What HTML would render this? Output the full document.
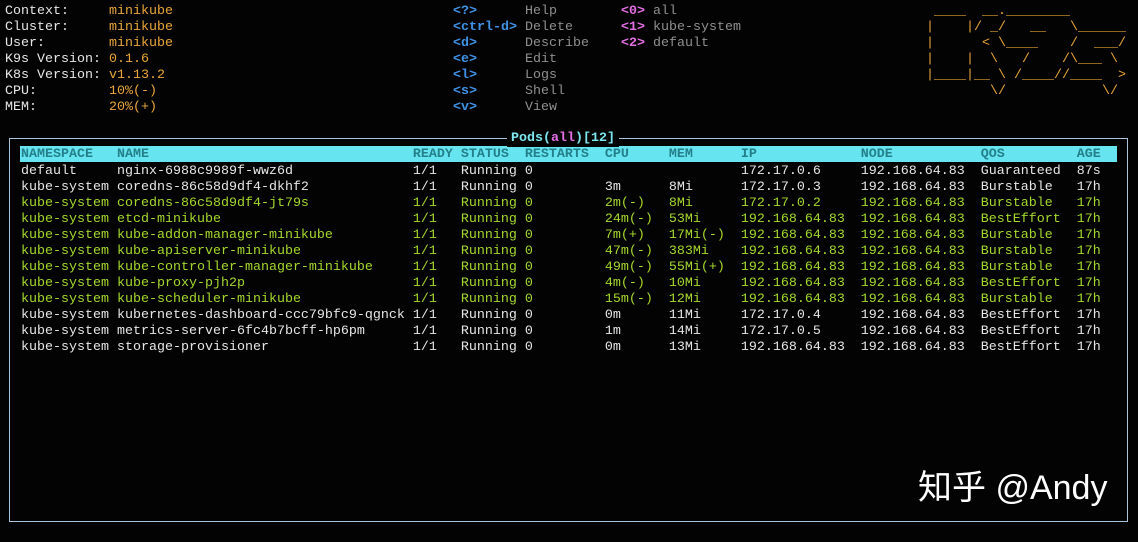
<!DOCTYPE html>
<html><head><meta charset="utf-8"><style>
html,body{margin:0;padding:0;background:#030303;width:1138px;height:542px;overflow:hidden}
pre{position:absolute;margin:0;font-family:"Liberation Mono",monospace;font-size:13.33px;line-height:16px;color:#e6e6e6}
.o{color:#e9a63c}.b{color:#3f93e6;font-weight:bold}.g{color:#8f8f8f}.m{color:#e36fe3;font-weight:bold}
.gr{color:#a4d72e}
#box{position:absolute;left:9px;top:138px;width:1119px;height:384px;border:1px solid #a9c4dc;box-sizing:border-box}
#hdr{position:absolute;left:20px;top:146px;width:1097px;height:16px;background:#66e4ef}
#title{position:absolute;left:507px;top:131px;background:#030303;padding:0 4px;color:#7de6ef;font-weight:bold}
#wm{position:absolute;left:918px;top:466px;color:#fff;font-family:"Liberation Sans","Noto Sans CJK SC",sans-serif;font-size:34px;line-height:44px}
</style></head><body>
<pre style="left:5px;top:4px">Context:     <span class="o">minikube</span>
Cluster:     <span class="o">minikube</span>
User:        <span class="o">minikube</span>
K9s Version: <span class="o">0.1.6</span>
K8s Version: <span class="o">v1.13.2</span>
CPU:         <span class="o">10%(-)</span>
MEM:         <span class="o">20%(+)</span></pre>
<pre style="left:453px;top:4px"><span class="b">&lt;?&gt;</span>      <span class="g">Help</span>
<span class="b">&lt;ctrl-d&gt;</span> <span class="g">Delete</span>
<span class="b">&lt;d&gt;</span>      <span class="g">Describe</span>
<span class="b">&lt;e&gt;</span>      <span class="g">Edit</span>
<span class="b">&lt;l&gt;</span>      <span class="g">Logs</span>
<span class="b">&lt;s&gt;</span>      <span class="g">Shell</span>
<span class="b">&lt;v&gt;</span>      <span class="g">View</span></pre>
<pre style="left:621px;top:4px"><span class="m">&lt;0&gt;</span> <span class="g">all</span>
<span class="m">&lt;1&gt;</span> <span class="g">kube-system</span>
<span class="m">&lt;2&gt;</span> <span class="g">default</span></pre>
<pre class="o" style="left:926px;top:4px"> ____  __.________       
|    |/ _/   __   \______
|      &lt; \____    /  ___/
|    |  \   /    /\___ \ 
|____|__ \ /____//____  &gt;
        \/            \/ </pre>
<div id="box"></div>
<div id="hdr"></div>
<pre id="title">Pods(<span style="color:#e36fe3">all</span>)[12]</pre>
<pre style="left:21px;top:147px;color:#237f8a;font-weight:bold">NAMESPACE   NAME                                 READY STATUS  RESTARTS  CPU     MEM      IP             NODE           QOS         AGE</pre>
<pre style="left:21px;top:164px">default     nginx-6988c9989f-wwz6d               1/1   Running 0                          172.17.0.6     192.168.64.83  Guaranteed  87s
kube-system coredns-86c58d9df4-dkhf2             1/1   Running 0         3m      8Mi      172.17.0.3     192.168.64.83  Burstable   17h
<span class="gr">kube-system coredns-86c58d9df4-jt79s             1/1   Running 0         2m(-)   8Mi      172.17.0.2     192.168.64.83  Burstable   17h
kube-system etcd-minikube                        1/1   Running 0         24m(-)  53Mi     192.168.64.83  192.168.64.83  BestEffort  17h
kube-system kube-addon-manager-minikube          1/1   Running 0         7m(+)   17Mi(-)  192.168.64.83  192.168.64.83  Burstable   17h
kube-system kube-apiserver-minikube              1/1   Running 0         47m(-)  383Mi    192.168.64.83  192.168.64.83  Burstable   17h
kube-system kube-controller-manager-minikube     1/1   Running 0         49m(-)  55Mi(+)  192.168.64.83  192.168.64.83  Burstable   17h
kube-system kube-proxy-pjh2p                     1/1   Running 0         4m(-)   10Mi     192.168.64.83  192.168.64.83  BestEffort  17h
kube-system kube-scheduler-minikube              1/1   Running 0         15m(-)  12Mi     192.168.64.83  192.168.64.83  Burstable   17h</span>
kube-system kubernetes-dashboard-ccc79bfc9-qgnck 1/1   Running 0         0m      11Mi     172.17.0.4     192.168.64.83  BestEffort  17h
kube-system metrics-server-6fc4b7bcff-hp6pm      1/1   Running 0         1m      14Mi     172.17.0.5     192.168.64.83  BestEffort  17h
kube-system storage-provisioner                  1/1   Running 0         0m      13Mi     192.168.64.83  192.168.64.83  BestEffort  17h</pre>
<div id="wm">知乎 @Andy</div>
</body></html>
